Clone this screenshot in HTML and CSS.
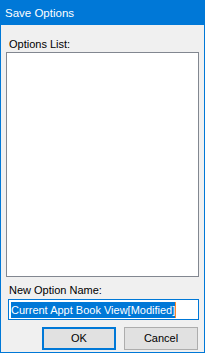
FILE: index.html
```html
<!DOCTYPE html>
<html>
<head>
<meta charset="utf-8">
<link rel="stylesheet" href="styles.css">
</head>
<body>
<div class="window">
  <div class="titlebar">Save Options</div>
  <div class="content">
    <div class="label first">Options List:</div>
    <div class="listbox"></div>
    <div class="label second">New Option Name:</div>
    <div class="textbox"><span class="sel">Current Appt Book View[Modified]</span><span class="caret"></span></div>
    <div class="buttons">
      <div class="btn default">OK</div>
      <div class="btn">Cancel</div>
    </div>
  </div>
</div>
</body>
</html>
```
FILE: styles.css
```css
html, body {
  margin: 0;
  padding: 0;
  background: #f0f0f0;
}
.window {
  width: 205px;
  height: 353px;
  box-sizing: border-box;
  border: 1px solid #0078d7;
  background: #f0f0f0;
  font-family: "Liberation Sans", Arial, sans-serif;
  font-size: 11px;
  color: #000;
  display: flex;
  flex-direction: column;
}
.titlebar {
  height: 24px;
  background: #0078d7;
  color: #fff;
  line-height: 24px;
  padding-left: 4px;
  font-size: 11.5px;
}
.content {
  display: flex;
  flex-direction: column;
  padding-top: 11px;
}
.label {
  height: 16px;
  line-height: 16px;
  padding-left: 8px;
}
.label.second {
  margin-top: 5px;
}
.listbox {
  margin-left: 5px;
  width: 193px;
  height: 225px;
  box-sizing: border-box;
  border: 1px solid #828790;
  background: #fff;
}
.textbox {
  margin-top: 1px;
  margin-left: 7px;
  width: 191px;
  height: 21px;
  box-sizing: border-box;
  border: 1px solid #0078d7;
  background: #fff;
  padding: 2px 0 0 2px;
  display: flex;
  align-items: flex-start;
}
.sel {
  background: #0078d7;
  color: #fff;
  line-height: 16px;
  height: 16px;
  white-space: nowrap;
}
.caret {
  width: 1px;
  height: 16px;
  background: #ff8a28;
}
.buttons {
  margin-top: 7px;
  display: flex;
  justify-content: flex-end;
  gap: 8px;
  padding-right: 6px;
}
.btn {
  width: 74px;
  height: 23px;
  box-sizing: border-box;
  border: 1px solid #adadad;
  background: #e1e1e1;
  text-align: center;
  line-height: 21px;
}
.btn.default {
  border: 2px solid #0078d7;
  line-height: 19px;
}
```
